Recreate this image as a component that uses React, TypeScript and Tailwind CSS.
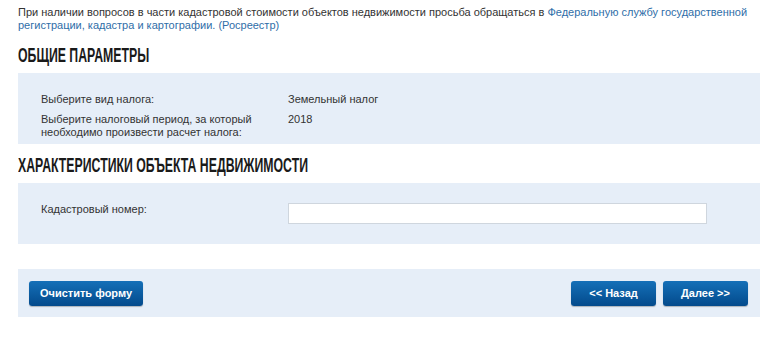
import React from 'react';

const Heading = ({ children }: { children: React.ReactNode }) => (
  <h2 className="h-[28px] flex items-center text-[21px] font-bold uppercase text-[#1a1a1a] leading-none whitespace-nowrap">
    <span className="inline-block origin-left scale-x-[0.585] [font-family:'Liberation_Sans',Arial,sans-serif]">
      {children}
    </span>
  </h2>
);

const Btn = ({ children, w }: { children: React.ReactNode; w: string }) => (
  <button
    className={`${w} h-[25px] rounded-[3px] bg-gradient-to-b from-[#1570b8] to-[#044a8c] text-white text-[11px] font-bold shadow-[0_1px_1px_rgba(0,0,0,0.25)]`}
  >
    {children}
  </button>
);

const App = () => {
  return (
    <div className="w-[768px] h-[341px] bg-white pl-[18px] pr-[8px] pt-[6px] text-[11px] leading-[13px] text-[#333] [font-family:'Liberation_Sans',Arial,sans-serif]">
      <p>
        При наличии вопросов в части кадастровой стоимости объектов недвижимости просьба обращаться в{' '}
        <a className="text-[#2f6ea8]">Федеральную службу государственной регистрации, кадастра и картографии. (Росреестр)</a>
      </p>

      <div className="mt-[8px]">
        <Heading>Общие параметры</Heading>
      </div>
      <div className="mt-[5px] bg-[#e6eef8] h-[71px] pl-[23px] pt-[20px]">
        <div className="flex">
          <div className="w-[247px]">Выберите вид налога:</div>
          <div>Земельный налог</div>
        </div>
        <div className="flex mt-[7px]">
          <div className="w-[247px]">
            Выберите налоговый период, за который
            <br />
            необходимо произвести расчет налога:
          </div>
          <div>2018</div>
        </div>
      </div>

      <div className="mt-[6px]">
        <Heading>Характеристики объекта недвижимости</Heading>
      </div>
      <div className="mt-[5px] bg-[#e6eef8] h-[61px] pl-[23px] pt-[20px] flex">
        <div className="w-[247px]">Кадастровый номер:</div>
        <input
          type="text"
          className="w-[419px] h-[21px] bg-white border border-[#cfd6de] outline-none"
        />
      </div>

      <div className="mt-[25px] bg-[#e6eef8] h-[48px] pl-[11px] pr-[12px] flex items-center justify-between">
        <Btn w="w-[114px]">Очистить форму</Btn>
        <div className="flex gap-[7px]">
          <Btn w="w-[85px]">&lt;&lt; Назад</Btn>
          <Btn w="w-[85px]">Далее &gt;&gt;</Btn>
        </div>
      </div>
    </div>
  );
};

export default App;
